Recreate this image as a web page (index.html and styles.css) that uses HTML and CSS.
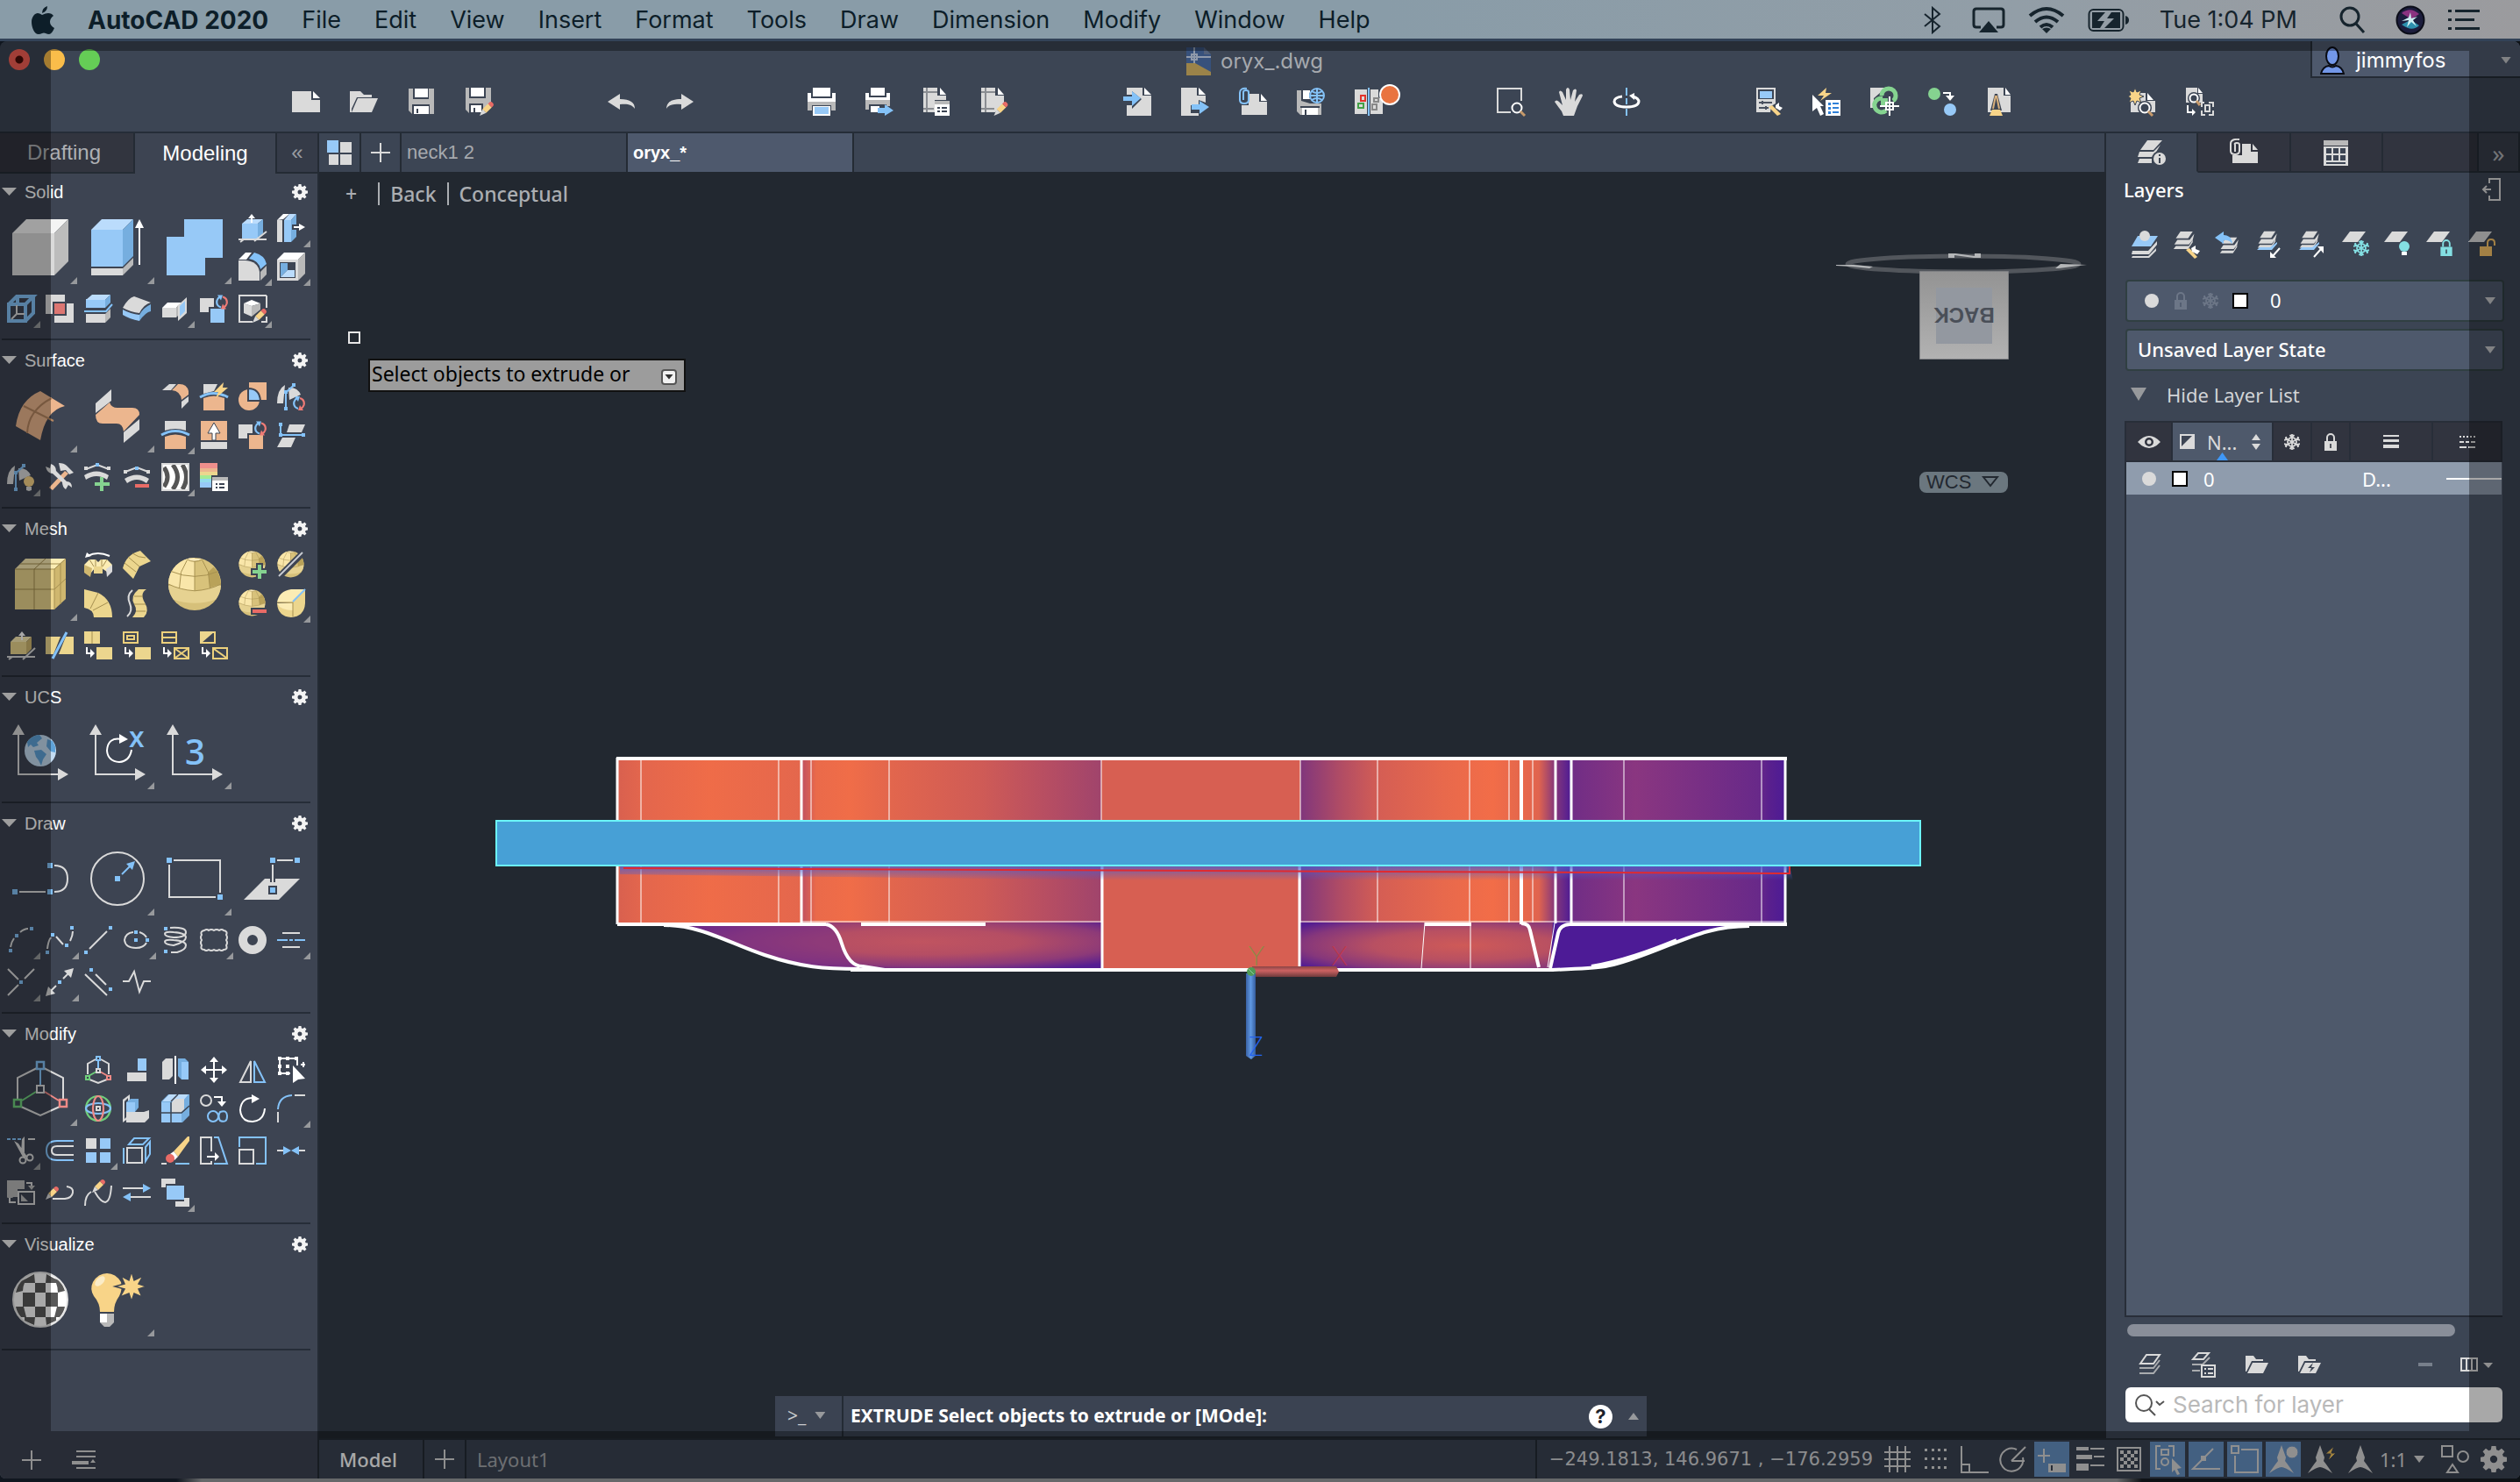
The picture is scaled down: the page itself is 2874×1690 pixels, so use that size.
FILE: index.html
```html
<!DOCTYPE html>
<html lang="en">
<head>
<meta charset="utf-8">
<title>AutoCAD 2020 - oryx_.dwg</title>
<link rel="stylesheet" href="styles.css">
</head>
<body>
<svg class="defs" aria-hidden="true">
  <symbol id="gear" viewBox="0 0 18 18"><path fill-rule="evenodd" d="M7.500 0h3l.4 2.500 1.500.6 2-1.500 2.100 2.100-1.500 2 .6 1.500 2.400.4v3l-2.400.4-.6 1.500 1.500 2-2.100 2.100-2-1.500-1.500.6-.4 2.300h-3l-.4-2.300-1.500-.6-2 1.500-2.100-2.100 1.500-2-.6-1.500L0 10.600v-3l2.400-.4L3 5.700l-1.500-2 2.100-2.100 2 1.500 1.500-.6zM9 6.500a2.500 2.500 0 1 0 0 5 2.500 2.500 0 0 0 0-5z"/></symbol>
  <symbol id="ball" viewBox="0 0 64 64"><circle cx="32" cy="32" r="31" fill="#d6c07a"/><path fill="#e6d291" d="M1 34a31 31 0 0 0 6 16c16 6 34 6 50 0a31 31 0 0 0 6-16z"/><path fill="#f9e6a9" d="M1 32q14 7 31 8V1a31 31 0 0 0-31 31z"/><path fill="#d8c27b" d="M32 40q17-1 31-8Q61 8 38 2l-6 3z"/><path fill="#b9a259" d="M50 36l13-4Q61 16 54 12l-6 6z"/><path fill="#fbecc0" d="M23 2q9 6 18 0z"/><path class="mesh" d="M32 5v35M23 4l-7 14-2 19M41 4l7 14 2 19M4 17q28 12 56 0M23 3q9 5 18 0M1 32q14 7 31 8 17-1 31-8"/></symbol>
  <symbol id="pencil" viewBox="0 0 16 16"><path fill="#f8d488" d="M3 9l6-6 4 4-6 6z"/><path fill="#e96b66" d="M10 2a2.800 2.800 0 0 1 4 4l-1 1-4-4z"/><path class="g" d="M3 9l4 4-7 3z"/></symbol>
  <symbol id="snow" viewBox="0 0 18 18"><g fill="none" stroke="currentColor" stroke-width="1.800"><path d="M9 0v18M1 4.500l16 9M1 13.500l16-9"/><circle cx="9" cy="9" r="5"/><path d="M6.500 1L9 3.500 11.500 1M6.500 17L9 14.500 11.500 17M0 7l3-.8L2 3M18 7l-3-.8L16 3M0 11l3 .8L2 15M18 11l-3 .8 1 3.200"/></g></symbol>
  <symbol id="lock" viewBox="0 0 14 20"><path fill="none" stroke="currentColor" stroke-width="2" d="M3 9V5a4 4 0 0 1 8 0v4"/><path fill="currentColor" fill-rule="evenodd" d="M0 9h14v11H0zM6.200 12v5h1.600v-5z"/></symbol>
  <symbol id="stack" viewBox="0 0 32 32"><path class="g" d="M10 1h16l-6 9H4zM6 12h16l6-8-2 8-5 6H2zM4 20h17l5-8v3l-6 9H1z"/></symbol>
  <symbol id="cycle" viewBox="0 0 14 16"><path fill="none" stroke="#84c2f8" stroke-width="2.200" d="M6 14Q0 12 1.500 6 2.500 3 5 2"/><path fill="#84c2f8" d="M2 0h6L6 6z"/><path fill="none" stroke="#ee7b76" stroke-width="2.200" d="M8 2q6 2 4.500 8-1 3-3.500 4"/><path fill="#ee7b76" d="M12 16H6l2-6z"/></symbol>
  <symbol id="ucs" viewBox="0 0 64 64"><path class="sg" d="M7 10v47h46"/><path class="g" d="M7 0l7 12H0zM52 50l12 7-12 7z"/></symbol>
  <symbol id="compass" viewBox="0 0 28 32"><path fill="currentColor" d="M14 0l5 14-1 4q4 5 10 14-10-7-14-7T0 32q6-9 10-14l-1-4z"/></symbol>
</svg>

<header class="menubar">
  <nav class="menus">
    <button class="apple" aria-label="Apple menu"><svg width="28" height="34" viewBox="0 0 28 34"><path fill="currentColor" d="M20 1q0 6-6 8 0-6 6-8zM14 11q4-2 7-2 4 0 6 3-4 3-4 7t5 7q-3 7-6 7-2 0-4-1t-4 0-4 1C5 33 2 25 2 19S6 9 9 9q2 0 5 2z"/></svg></button>
    <button class="appname">AutoCAD 2020</button>
    <button>File</button><button>Edit</button><button>View</button><button>Insert</button><button>Format</button><button>Tools</button><button>Draw</button><button>Dimension</button><button>Modify</button><button>Window</button><button>Help</button>
  </nav>
  <div class="tray">
    <svg class="blue" width="22" height="32" viewBox="0 0 22 32"><path class="ik" d="M2 9l17 14-8 7V2l8 7L2 23"/></svg>
    <svg width="38" height="32" viewBox="0 0 38 32"><path class="ik3" d="M10 24H5q-3 0-3-3V6q0-3 3-3h28q3 0 3 3v15q0 3-3 3h-5"/><path fill="currentColor" d="M19 17l11 13H8z"/></svg>
    <svg width="42" height="32" viewBox="0 0 42 32"><path class="ik4" d="M2 11q19-16 38 0M8 18q13-11 26 0M14 24q7-6 14 0"/><path fill="currentColor" d="M16 26q5-3 10 0l-5 5z"/></svg>
    <svg width="48" height="28" viewBox="0 0 48 28"><rect class="ik" x="1.500" y="2" width="39" height="24" rx="5"/><path fill="currentColor" d="M5 5h15l-9 10h8l-5 8H5zM27 5h10v18H19l11-11h-8z"/><path fill="currentColor" d="M43 9q4 1 4 5t-4 5z"/></svg>
    <time>Tue 1:04 PM</time>
    <svg class="spot" width="30" height="32" viewBox="0 0 30 32"><circle class="ik3" cx="12" cy="12" r="10"/><path class="ik3" d="M19 20l9 10"/></svg>
    <svg class="siri" width="34" height="34" viewBox="0 0 34 34"><circle cx="17" cy="17" r="15.500" fill="#1c1d3d" stroke="#0b0d18" stroke-width="2"/><path fill="#8a3280" d="M7 9q10-8 20 1l-9 6z"/><path fill="#2c8fae" d="M7 22q7-4 11-5l9 6q-8 8-20-1z"/><path fill="#cdeef2" d="M17 8l1 7 7-2-5 4 4 7-6-5-5 6 2-8-8 1 8-4z"/></svg>
    <svg width="36" height="26" viewBox="0 0 36 26"><path fill="currentColor" d="M0 1h4v3H0zM8 1h28v3H8zM0 11h4v3H0zM8 11h22v3H8zM0 21h4v3H0zM8 21h28v3H8z"/></svg>
  </div>
</header>

<div class="window">
  <div class="titlebar">
    <div class="lights"><button class="close" aria-label="Close"></button><button class="min" aria-label="Minimize"></button><button class="max" aria-label="Zoom"></button></div>
    <h1 class="title"><svg width="28" height="32" viewBox="0 0 28 32"><path fill="#37517c" d="M0 0h20l8 8v24H0z"/><path fill="#52607a" d="M20 0l8 8h-8z"/><path fill="#9b8349" d="M0 18h10l18 10v4H0z"/><path fill="none" stroke="#8f99aa" stroke-width="2" d="M9 0v18M0 11h28M6 8h6v6H6z"/></svg><span>oryx_.dwg</span></h1>
    <button class="user"><svg width="28" height="34" viewBox="0 0 28 34"><ellipse cx="14" cy="12" rx="7" ry="10" fill="#7397e8" stroke="#0a0c14" stroke-width="2"/><path fill="#7397e8" stroke="#0a0c14" stroke-width="2" d="M1 32q2-8 9-9 4 3 8 0 7 1 9 9z"/></svg><span>jimmyfos</span><i class="tri"></i></button>
  </div>

  <div class="toolbar" role="toolbar" aria-label="Quick access">
    <div class="tgroup">
      <button aria-label="New"><svg viewBox="0 0 32 32"><path class="g" d="M0 4h22v10h10v14H0z"/><path class="w" d="M24 4l8 8h-8z"/></svg></button>
      <button aria-label="Open"><svg viewBox="0 0 32 32"><path class="g" d="M0 4h12l4 4h9v3H8L2 24v4H0z"/><path class="g" d="M9 12h23l-7 16H2z"/></svg></button>
      <button aria-label="Save"><svg viewBox="0 0 32 32"><path class="gd" d="M1 1h5v12h18V1h6v29H5l-4-4z"/><path class="w" d="M8 1h15v10H8z"/><path class="k" d="M5 19h20v11H5z"/><path class="w" d="M7 21h17v9H7z"/><path class="k" d="M10 24h2v5h-2z"/></svg></button>
      <button aria-label="Save as"><svg viewBox="0 0 32 32"><path class="gd" d="M0 0h4v12h19V0h6v17L19 29H4l-4-4z"/><path class="w" d="M6 0h15v10H6z"/><path class="k" d="M4 18h16v11H4z"/><path class="w" d="M6 20h12v8H6z"/><path class="k" d="M9 23h2v5H9z"/><use href="#pencil" x="16" y="15" width="17" height="17"/></svg></button>
    </div>
    <div class="tgroup">
      <button aria-label="Undo"><svg viewBox="0 0 32 32"><path class="g" d="M0 16L14 7v6c12 0 17 4 17 11-3-5-9-6-17-5v6z"/></svg></button>
      <button aria-label="Redo"><svg viewBox="0 0 32 32"><path class="g" d="M32 16L18 7v6C6 13 1 17 1 24c3-5 9-6 17-5v6z"/></svg></button>
    </div>
    <div class="tgroup">
      <button aria-label="Plot"><svg viewBox="0 0 32 32"><path class="w" d="M6 0h20v10H6zM0 6h4v6h24V6h4v10H0z"/><path class="gd" d="M0 16h32v10h-5v-6H5v6H0z"/><path class="w" d="M6 21h20v11H6z"/><path class="b" d="M8 22h16v8H8z"/></svg></button>
      <button aria-label="Batch plot"><svg viewBox="0 0 32 32"><path class="w" d="M6 0h16v9H6zM0 6h4v5h20V6h4v8H0z"/><path class="gd" d="M0 14h28v7h-4v-2H4v6H0z"/><path class="w" d="M6 21h10v7H6z"/><path class="ba" d="M14 23h8v-4l10 7-10 6v-3h-8z"/></svg></button>
      <button aria-label="Page setup"><svg viewBox="0 0 32 32"><path class="g" d="M0 0h16v9h10v5H13v14H0z"/><path class="w" d="M19 0l7 8h-7z"/><path fill="none" stroke="#8a8d92" stroke-width="2" d="M4 0v28M0 5h16M0 24h12"/><path class="gd" d="M13 15h17v4H13z"/><path class="w" d="M13 19h17v13H13z"/><path class="k" d="M16 22h3v2h-3zM21 22h6v2h-6zM16 26h3v2h-3zM21 26h6v2h-6z"/></svg></button>
      <button aria-label="Edit page"><svg viewBox="0 0 32 32"><path class="g" d="M0 0h16v9h10v8L16 28H0z"/><path class="w" d="M19 0l7 8h-7z"/><path fill="none" stroke="#8a8d92" stroke-width="2" d="M5 0v28M0 5h16M0 24h15"/><use href="#pencil" x="14" y="15" width="18" height="17"/></svg></button>
    </div>
    <div class="tgroup">
      <button aria-label="Import"><svg viewBox="0 0 32 32"><path class="g" d="M4 0h18v9h10v23H4V20h6v4l11-11-11-9v4H4z"/><path class="w" d="M24 0l8 8h-8z"/><path class="ba" d="M0 10h10V4l10 8-10 9v-6H0z"/></svg></button>
      <button aria-label="Export"><svg viewBox="0 0 32 32"><path class="g" d="M0 0h18v9h10v8l-8-3v6h-9v9h9v3H0z"/><path class="w" d="M20 0l8 8h-8z"/><path class="ba" d="M12 19h9v-4l11 7-11 8v-5h-9z"/></svg></button>
      <button aria-label="Attach"><svg viewBox="0 0 32 32"><path class="g" d="M11 7h12v9h9v15H3V20h8z"/><path class="w" d="M25 7l7 8h-7z"/><path fill="none" stroke="#84c2f8" stroke-width="2" d="M9 1q-8-1-8 5v8q0 4 5 4t5-4V5q0-2-3-2T5 5v9"/></svg></button>
      <button aria-label="Save to web"><svg viewBox="0 0 32 32"><path class="gd" d="M0 3h5v12l10 3h13v13H4l-4-4z"/><path class="w" d="M7 3h8v10H7zM6 23h18v8H6z"/><path class="k" d="M4 21h22v2H4zM9 25h2v6H9z"/><circle cx="23" cy="9" r="9" fill="#3c4554"/><g fill="none" stroke="#84c2f8" stroke-width="2"><circle cx="23" cy="9" r="8"/><path d="M23 1v16M15 9h16M17 4q6 4 12 0M17 14q6-4 12 0"/></g></svg></button>
      <button class="badge" aria-label="Compare, new"><svg viewBox="0 0 32 32"><path class="g" d="M0 2h14v28H0zM18 2h9v10h5v18H18z"/><path class="ba" d="M15 0h2v32h-2z"/><path fill="none" stroke="#e2342c" stroke-width="2" d="M7 9h5v6H7z"/><path fill="none" stroke="#43a047" stroke-width="2" d="M4 18h6v5H4z"/><path fill="none" stroke="#888" stroke-width="2" d="M20 19h5v6h-5zM22 12h5v4h-5z"/></svg></button>
    </div>
    <div class="tgroup">
      <button aria-label="Zoom window"><svg viewBox="0 0 32 32"><path class="sg" d="M16 28H1V1h27v14"/><circle class="sw" cx="23" cy="23" r="5.500"/><path stroke="#c79a6b" stroke-width="3" d="M27 27l5 5"/></svg></button>
      <button aria-label="Pan"><svg viewBox="0 0 32 32"><path class="g" d="M10 32q-1-5-5-9l-5-7q2-3 5 0l4 4L5 5q1-3 4 0l4 9V2q2-4 4 0l1 12 3-11q3-3 4 0l-2 13 5-8q4-2 4 1l-6 12-4 11z"/></svg></button>
      <button aria-label="Orbit"><svg viewBox="0 0 32 32"><path fill="none" stroke="#84c2f8" stroke-width="2" d="M16 0v9M16 12v7M16 24v8"/><path class="sw3" d="M11 10Q2 11 2 16q1 6 14 6t14-6q0-4-7-6"/><path class="w" d="M25 6l-6 3 6 5z"/></svg></button>
    </div>
    <div class="tgroup">
      <button aria-label="Properties"><svg viewBox="0 0 32 32"><path class="g" d="M2 0h22v18l-5 3-1 7H2z"/><path fill="#3c4554" d="M4 2h18v11H4z"/><path class="b" d="M6 4h14v8H6z"/><path class="sk" d="M5 17h15M5 23h11M9 15v4M13 21v4"/><path fill="#f8d488" d="M16 22l4-2 10 10-4 2z"/><path class="w" d="M24 20l4-3v4l4 2-3 3-5-3z"/></svg></button>
      <button aria-label="Quick select"><svg viewBox="0 0 32 32"><path fill="#f8d488" d="M16 0L6 9h7l-4 6 13-9h-7z"/><path class="w" d="M0 8l13 13H9l4 9-4 2-4-9-5 4z"/><path class="w" d="M15 14h17v18H15z"/><path fill="#2f80d8" d="M18 17h3v3h-3zM23 17h7v2h-7zM18 22h3v3h-3zM23 22h7v2h-7zM18 27h3v3h-3zM23 27h7v2h-7z"/></svg></button>
      <button aria-label="Geolocation"><svg viewBox="0 0 32 32"><path class="g" d="M0 0h18L4 12v11H0z"/><path fill="none" stroke="#85d390" stroke-width="5" d="M14 12a8 8 0 1 0 4 14M13 9a8 8 0 0 1 16 0q0 4-3 6"/><path fill="#85d390" d="M12 12h8v8h-8z"/><path fill="none" stroke="#fff" stroke-width="2" d="M22 10v22M11 21h22M18 17h8v8h-8z"/></svg></button>
      <button aria-label="Match properties"><svg viewBox="0 0 32 32"><circle class="gn" cx="7" cy="7" r="7"/><circle class="b" cx="25" cy="25" r="7"/><path class="sw" d="M17 6h8v5"/><path class="w" d="M20 9h10l-5 6z"/></svg></button>
      <button aria-label="Measure"><svg viewBox="0 0 32 32"><path class="g" d="M2 0h18v9h8v19H2z"/><path class="w" d="M22 0l6 8h-6z"/><path class="k" d="M10 7h3l5 19H5z"/><path fill="none" stroke="#d8b07c" stroke-width="2" d="M11 9L8 24M12 9l3 15"/><path fill="#f8d488" d="M7 25h9l3 7H4z"/></svg></button>
    </div>
    <div class="tgroup">
      <button aria-label="Create block"><svg viewBox="0 0 32 32"><path class="g" d="M3 15l10-9h7v9h11v13H3z"/><path class="w" d="M22 6l7 8h-7z"/><path fill="#f8d488" stroke="#3c4554" d="M8 0l2 5 5-2-2 5 5 2-5 2 2 5-5-2-2 5-2-5-5 2 2-5-3-2 3-2-2-5 5 2z"/><circle cx="19" cy="23" r="8" fill="#3c4554"/><circle class="sw" cx="19" cy="23" r="5.500"/><path stroke="#c79a6b" stroke-width="3" d="M23 27l5 5"/></svg></button>
      <button aria-label="Insert block"><svg viewBox="0 0 32 32"><path class="g" d="M0 0h13v7h6v10H0z"/><path class="w" d="M14 0l5 6h-5z"/><circle cx="9" cy="12" r="7" fill="#3c4554"/><circle class="sw" cx="9" cy="12" r="4.500"/><path stroke="#c79a6b" stroke-width="3" d="M12 15l4 5"/><path class="sw" d="M2 20v8h6"/><path class="w" d="M7 24l4 4-4 4z"/><path class="sg" d="M21 17h-3v5M26 17h5v5M31 26v5h-5M22 31h-4v-5M22 20h5v7h-5z"/></svg></button>
    </div>
  </div>

  <div class="workspace">
    <aside class="palette">
      <div class="ptabs"><button class="ptab dim">Drafting</button><button class="ptab on">Modeling</button><button class="ptab fold" aria-label="Collapse">«</button></div>

      <section class="tools">
        <header><i class="tri"></i><h2>Solid</h2><button class="cog" aria-label="Solid settings"><svg><use href="#gear"/></svg></button></header>
        <div class="grid">
          <button class="big fly" aria-label="Box"><svg viewBox="0 0 64 64"><path fill="#dadada" d="M0 16h48v48H0z"/><path fill="#f4f4f4" d="M0 16L16 0h48L48 16z"/><path fill="#bcbcbc" d="M48 16L64 0v48L48 64z"/></svg></button>
          <button class="big fly" aria-label="Extrude"><svg viewBox="0 0 64 64"><path class="b" d="M2 12h36v42H2z"/><path class="bl" d="M2 12L14 0h36L38 12z"/><path class="bd" d="M38 12L50 0v42L38 54z"/><path class="g" d="M2 56h36v8H2z"/><path class="gd" d="M38 56l12-12v8L38 64z"/><path class="sw" d="M57 52V8"/><path class="w" d="M57 0l5 10H52z"/></svg></button>
          <button class="big fly" aria-label="Union"><svg viewBox="0 0 64 64"><path class="b" d="M20 0h44v44H44v20H0V20h20z"/></svg></button>
          <button aria-label="Presspull"><svg viewBox="0 0 32 32"><path class="b" d="M4 11h18v17H4z"/><path class="bl" d="M4 11l6-5h18l-6 5z"/><path class="bd" d="M22 11l6-5v16l-6 6z"/><path class="sg" d="M0 29h24M18 31L32 20M2 32l4-3M24 29h8"/><path class="w" d="M15 0l4 5h-3v5h-2V5h-3z"/></svg></button>
          <button class="fly" aria-label="Offset face"><svg viewBox="0 0 32 32"><path class="g" d="M0 7h6v25H0z"/><path class="w" d="M0 7l7-7h7L7 6z"/><path class="b" d="M8 7h8v25H8z"/><path class="bl" d="M8 7l6-7h8l-6 7z"/><path class="bd" d="M16 7l6-7v26l-6 6z"/><path class="k" d="M17 12h8v6h-8z"/><path class="w" d="M19 14h6v-3l7 4-7 4v-3h-6z"/></svg></button>
          <button class="fly" aria-label="Fillet edge"><svg viewBox="0 0 32 32"><path class="g" d="M0 9h8q14 1 16 13v10H0z"/><path class="w" d="M0 8l8-8h7L9 8z"/><path class="ba" d="M12 7l6-7q12 3 14 13l-7 6Q23 9 12 7z"/><path class="gd" d="M25 22l7-7v10l-7 7z"/></svg></button>
          <button class="fly" aria-label="Shell"><svg viewBox="0 0 32 32"><path class="g" fill-rule="evenodd" d="M0 8h24v24H0zM3 11v18h18V11z"/><path class="w" d="M0 8l8-8h24l-8 8z"/><path class="gd" d="M24 8l8-8v24l-8 8z"/><path class="bd" d="M4 12h8v8l-8 8z"/><path class="bl" d="M12 20h8v8H4z"/></svg></button>
          <button class="fly" aria-label="Polysolid"><svg viewBox="0 0 32 32"><path fill="none" stroke="#84c2f8" stroke-width="4" d="M2 11h19v19H2zM2 11l9-9h19L21 11M30 2v19l-9 9M12 2v7"/><path class="sg" d="M11 12v10l-6 6M12 22h8"/></svg></button>
          <button aria-label="Interfere"><svg viewBox="0 0 32 32"><path class="g" d="M0 0h22v8H8v14H0zM24 10h8v22H10v-8h14z"/><path fill="#dc7672" d="M10 10h12v12H10z"/></svg></button>
          <button aria-label="Slice"><svg viewBox="0 0 32 32"><path class="b" d="M2 5h22v10H2z"/><path class="bl" d="M2 6l7-6h21l-6 6z"/><path class="bd" d="M24 6l6-6v9l-6 6z"/><path fill="none" stroke="#84c2f8" stroke-width="2" d="M0 19h25l7-8"/><path class="g" d="M2 22h22v10H2z"/><path class="gd" d="M24 22l6-6v10l-6 6z"/></svg></button>
          <button aria-label="Thicken"><svg viewBox="0 0 32 32"><path class="g" d="M0 15Q6 4 13 2l19 7q-8 2-13 12Q9 20 0 15z"/><path class="b" d="M0 17q9 5 19 6v7Q8 28 0 23z"/><path class="bd" d="M19 23q4-8 13-12v8q-6 1-13 11z"/></svg></button>
          <button class="fly" aria-label="Extract edges"><svg viewBox="0 0 32 32"><path class="g" d="M1 15h16v11H1z"/><path class="w" d="M1 15l6-6h16l-6 6z"/><path class="gd" d="M17 15l2-3v12l-2 2z"/><path class="g" d="M19 12l10-9v18L19 30z"/><path class="b" d="M21 13l6-6v12l-6 6z"/></svg></button>
          <button aria-label="Convert to solid"><svg viewBox="0 0 32 32"><path class="g" d="M0 4h16v10h-6v6H0z"/><path class="b" d="M12 16h16v16H12z"/><use href="#cycle" x="18" y="0" width="14" height="17"/></svg></button>
          <button class="fly" aria-label="Edit solid"><svg viewBox="0 0 32 32"><path class="sg" d="M32 1v14M32 1H1v30h15M26 31h6v-6"/><path class="g" d="M6 10l9 3v12l-9-4z"/><path class="w" d="M6 10l9-4 10 4-10 3z"/><path class="gd" d="M15 13l10-3v7l-10 8z"/><use href="#pencil" x="16" y="15" width="17" height="17"/></svg></button>
        </div>
      </section>

      <section class="tools">
        <header><i class="tri"></i><h2>Surface</h2><button class="cog" aria-label="Surface settings"><svg><use href="#gear"/></svg></button></header>
        <div class="grid">
          <button class="big fly" aria-label="Surface network"><svg viewBox="0 0 64 64"><path class="o" d="M4 44Q8 14 32 4l28 17Q38 26 32 60z"/><path fill="none" stroke="#b58660" stroke-width="2" d="M13 21l34 17M17 52Q18 26 45 12"/></svg></button>
          <button class="big fly" aria-label="Sweep"><svg viewBox="0 0 64 64"><path class="g" d="M7 18L25 2v13L7 29z"/><path class="o" d="M7 31l16-14q2 6 9 6h17q8 0 8 8L39 50q-1-9-8-9H15q-8 0-8-10z"/><path class="g" d="M39 51l18-15v12L39 63z"/></svg></button>
          <button aria-label="Surface blend"><svg viewBox="0 0 32 32"><path class="g" d="M1 9l8-7h8l-6 7z"/><path class="o" d="M12 9l7-7q10-1 12 8v4l-8 6Q22 10 12 9z"/><path class="g" d="M23 22l8-6v6l-8 8z"/></svg></button>
          <button aria-label="Surface trim"><svg viewBox="0 0 32 32"><path class="g" d="M4 2h16l-4 8-12 3z"/><path class="o" d="M4 18q12-5 24 0v14H4z"/><path fill="none" stroke="#84c2f8" stroke-width="3" d="M0 17q16-9 32 0"/><path fill="#f8d488" d="M27 0L16 11h5l-3 7 14-12h-6z"/></svg></button>
          <button aria-label="Surface subtract"><svg viewBox="0 0 32 32"><path class="o" d="M12 0h20v20h-7Q23 9 12 8z"/><circle class="o" cx="12" cy="20" r="12"/><path fill="#97c9f7" stroke="#3d4452" stroke-width="2" d="M11 7q13 0 14 14H11z"/></svg></button>
          <button aria-label="Rebuild"><svg viewBox="0 0 32 32"><path class="g" d="M0 24Q0 8 9 3L7 24zM13 6q10-1 14 8L14 20z"/><path class="ba" d="M9 12h2v18H9zM17 1h4v4h-4zM8 9h4v4H8zM8 28h4v4H8zM10 10l8-7 1 2-8 7z"/><use href="#cycle" x="18" y="16" width="14" height="16"/></svg></button>
          <button class="fly" aria-label="Surface patch"><svg viewBox="0 0 32 32"><path class="g" d="M4 0h24v11q-12-4-24 0z"/><path class="o" d="M4 18q12-5 24 0v14H4z"/><path fill="none" stroke="#84c2f8" stroke-width="3" d="M0 16q16-9 32 0"/></svg></button>
          <button aria-label="Extend"><svg viewBox="0 0 32 32"><path class="o" d="M1 0h30v22H1z"/><path class="g" d="M1 24h30v8H1z"/><path fill="#fff" stroke="#3d4452" d="M16 2l7 12h-5v8h-4v-8H9z"/></svg></button>
          <button aria-label="Convert to surface"><svg viewBox="0 0 32 32"><path class="g" d="M0 4h16v10h-6v6H0z"/><path class="o" d="M12 16h16v16H12z"/><use href="#cycle" x="18" y="0" width="14" height="17"/></svg></button>
          <button aria-label="Project"><svg viewBox="0 0 32 32"><path class="g" d="M14 4h18l-4 9H11zM6 19h15l-5 11H0z"/><path fill="none" stroke="#84c2f8" stroke-width="2" d="M4 4v12h26"/><path class="ba" d="M2 2h4v4H2zM2 14h4v4H2zM28 14h4v4h-4z"/></svg></button>
          <button class="fly" aria-label="Show CV"><svg viewBox="0 0 32 32"><path class="g" d="M0 24Q0 8 9 3L7 24zM13 6q10-1 14 8L14 20z"/><path class="ba" d="M9 12h2v18H9zM17 1h4v4h-4zM8 9h4v4H8zM8 28h4v4H8zM10 10l8-7 1 2-8 7z"/><circle cx="25" cy="21" r="6" fill="#f8d488"/><path class="g" d="M22 27h6v4l-3 1-3-1z"/></svg></button>
          <button aria-label="Tools"><svg viewBox="0 0 32 32"><path class="o" d="M4 28l18-19 4 3L8 31z"/><path class="g" d="M0 4l5 2 1-5q6 2 6 8l12 12q6 0 6 7l-4-3-3 5q-4-3-4-8L8 12Q2 12 0 4zM15 0q6 0 9 3l8 8-5 2-4-5-6 1z"/></svg></button>
          <button aria-label="CV add"><svg viewBox="0 0 32 32"><path class="sg" d="M2 7L15 2l13 5"/><path class="g" d="M0 4h4v4H0zM26 4h4v4h-4zM0 14q14-9 28 0l-2 5q-12-8-24 0z"/><path class="ba" d="M13 0h4v4h-4z"/><path class="gn" d="M18 16h4v6h7v4h-7v6h-4v-6h-6v-4h6z"/></svg></button>
          <button aria-label="CV remove"><svg viewBox="0 0 32 32"><path class="sg" d="M3 10l13-5 13 5"/><path class="g" d="M1 8h4v4H1zM27 8h4v4h-4zM2 18q14-9 28 0l-3 5q-11-8-22 0z"/><path class="ba" d="M14 4h4v4h-4z"/><path fill="#e96b66" d="M14 24h16v4H14z"/></svg></button>
          <button class="fly" aria-label="Zebra"><svg viewBox="0 0 32 32"><path class="w" d="M0 0h32v32H0z"/><path fill="none" stroke="#555" stroke-width="5" d="M3 5q8 11 0 22M13 2q11 14 0 28M24 2q9 14 0 28"/><path fill="none" stroke="#dadada" stroke-width="2" d="M1 1h30v30H1z"/></svg></button>
          <button aria-label="Analysis options"><svg viewBox="0 0 32 32"><path fill="#ee8f8c" d="M0 0h20v6H0z"/><path class="o" d="M0 6h20v4H0z"/><path class="y" d="M0 10h20v4H0z"/><path fill="#a5eb94" d="M0 14h13v4H0z"/><path fill="#93dcec" d="M0 18h13v4H0z"/><path class="b" d="M0 22h13v6H0z"/><path class="gd" d="M14 16h18v4H14z"/><path class="w" d="M14 20h18v12H14z"/><path class="k" d="M18 23h2v2h-2zM22 23h6v2h-6zM18 27h2v2h-2zM22 27h6v2h-6z"/></svg></button>
        </div>
      </section>

      <section class="tools">
        <header><i class="tri"></i><h2>Mesh</h2><button class="cog" aria-label="Mesh settings"><svg><use href="#gear"/></svg></button></header>
        <div class="grid">
          <button class="big fly" aria-label="Mesh box"><svg viewBox="0 0 64 64"><path class="y" d="M3 15h45v46H3z"/><path class="yl" d="M3 15L15 3h46L48 15z"/><path class="yd" d="M48 15L61 3v46L48 61z"/><path class="mesh" d="M3 15h45v46M48 15L61 3M3 38h45l13-12M25 61V15L38 3M9 9h46v46"/></svg></button>
          <button aria-label="Revolved mesh"><svg viewBox="0 0 32 32"><path class="yl" d="M0 16l6-6h7l3 3 3-3h7l6 6-6 8-6-4h-8l-4 5z"/><path class="yd" d="M0 16l9 4-2 10-7-5z"/><path class="y" d="M11 18h10v8H11z"/><path class="g" d="M25 21l7-5v8l-6 6z"/><path class="mesh" d="M6 10l5 8M13 10v8M20 10v8M26 10l-5 8"/><path class="sw" d="M4 6Q15 0 29 6"/><path class="w" d="M1 8l2-6 5 4z"/></svg></button>
          <button aria-label="Edge mesh"><svg viewBox="0 0 32 32"><path class="y" d="M20 0l12 12-13 6-7 14-12-12Q4 4 20 0z"/><path class="mesh" d="M6 7l13 11M11 3q7 5 15 5M2 14l13 10"/></svg></button>
          <button class="big" aria-label="Mesh sphere"><svg viewBox="0 0 64 64"><use href="#ball" x="1" y="1" width="62" height="62"/></svg></button>
          <button aria-label="Smooth more"><svg viewBox="0 0 32 32"><use href="#ball" x="0" y="0" width="31" height="31"/><path fill="#85d390" stroke="#3d4452" stroke-width="2" d="M21 15h6v6h6v6h-6v6h-6v-6h-6v-6h6z"/></svg></button>
          <button aria-label="Refine mesh"><svg viewBox="0 0 32 32"><use href="#ball" x="0" y="0" width="31" height="31"/><path stroke="#3d4452" stroke-width="7" d="M2 30L30 2"/><path stroke="#c9ccd2" stroke-width="2" d="M2 29L29 2"/></svg></button>
          <button aria-label="Tabulated mesh"><svg viewBox="0 0 32 32"><path class="y" d="M0 0l16 4q16 8 16 28H11q0-9-11-11z"/><path class="mesh" d="M16 4L7 22M27 15l-17 9"/></svg></button>
          <button aria-label="Ruled mesh"><svg viewBox="0 0 32 32"><path class="sg" d="M11 1q-7 6-3 15t-3 15"/><path class="y" d="M27 0q-8 5-2 15t-1 17H11q7-7 2-15-5-9 5-17z"/><path class="mesh" d="M13 8h10M13 17h13M15 25h11"/></svg></button>
          <button aria-label="Smooth less"><svg viewBox="0 0 32 32"><use href="#ball" x="0" y="0" width="31" height="31"/><path fill="#e96b66" stroke="#3d4452" stroke-width="2" d="M15 22h18v6H15z"/></svg></button>
          <button class="fly" aria-label="Add crease"><svg viewBox="0 0 32 32"><path class="yl" d="M0 15Q2 2 16 0h16L18 15z"/><path class="y" d="M0 16l18-1L32 0v16q-1 15-16 16Q1 31 0 16z"/><path class="yl" d="M0 16h18v8Q4 24 0 16z"/><path class="mesh" d="M0 15h18v16"/><path stroke="#84c2f8" stroke-width="2" d="M18 14L32 0"/></svg></button>
          <button aria-label="Extrude face"><svg viewBox="0 0 32 32"><path class="y" d="M4 12h18v14H4z"/><path class="yl" d="M4 12l6-6h18l-6 6z"/><path class="yd" d="M22 12l6-6v14l-6 6z"/><path class="sg" d="M0 29h27M18 32L32 19M2 32l4-3M24 29h8"/><path class="w" d="M17 0l4 5h-3v5h-2V5h-3z"/></svg></button>
          <button aria-label="Split face"><svg viewBox="0 0 32 32"><path class="y" d="M0 6h17L9 26H0zM23 6h9v20H15z"/><path stroke="#84c2f8" stroke-width="3" d="M8 31L24 1"/></svg></button>
          <button aria-label="Merge face"><svg viewBox="0 0 32 32"><path class="y" d="M0 0h18v14H0zM14 18h18v14H14z"/><path class="mesh" d="M9 0v14"/><path class="sw" d="M3 18v7h5"/><path class="w" d="M7 20l5 5-5 5z"/></svg></button>
          <button aria-label="Close hole"><svg viewBox="0 0 32 32"><path class="sy" d="M1 1h16v12H1zM5 5h8v4H5z"/><path class="y" d="M14 18h18v14H14z"/><path class="sw" d="M3 18v7h5"/><path class="w" d="M7 20l5 5-5 5z"/></svg></button>
          <button aria-label="Collapse face"><svg viewBox="0 0 32 32"><path class="sy" d="M1 1h16v12H1zM1 7h16M15 19h16v12H15zM16 20l14 10M30 20L16 30"/><path class="sw" d="M3 18v7h5"/><path class="w" d="M7 20l5 5-5 5z"/></svg></button>
          <button aria-label="Spin edge"><svg viewBox="0 0 32 32"><path class="sy" d="M1 1h16v12H1zM15 19h16v12H15zM16 20l14 10"/><path class="y" d="M0 0h17L2 13H0z"/><path class="sw" d="M3 18v7h5"/><path class="w" d="M7 20l5 5-5 5z"/></svg></button>
        </div>
      </section>

      <section class="tools">
        <header><i class="tri"></i><h2>UCS</h2><button class="cog" aria-label="UCS settings"><svg><use href="#gear"/></svg></button></header>
        <div class="grid">
          <button class="big" aria-label="World UCS"><svg viewBox="0 0 64 64"><use href="#ucs"/><circle cx="32" cy="30" r="18" fill="#c4dcf2"/><path fill="#5fa3d9" d="M17 20q6-8 14-8l3 4-6 5 2 3-6 2-3-3-3 3zM25 30l8-1 6 5-4 6-2 7-3-6-3-4zM40 17l6 2 3 6v7l-5-1-5-6z"/></svg></button>
          <button class="big fly" aria-label="Rotate UCS about X"><svg viewBox="0 0 64 64"><use href="#ucs"/><path class="sw" d="M37 17q-16-3-17 13 1 12 14 13 12-1 14-14"/><path class="w" d="M34 11l10 6-10 5z"/><text x="45" y="26" class="axis">x</text></svg></button>
          <button class="big fly" aria-label="3 point UCS"><svg viewBox="0 0 64 64"><use href="#ucs"/><text x="21" y="46" class="axis three">3</text></svg></button>
        </div>
      </section>

      <section class="tools">
        <header><i class="tri"></i><h2>Draw</h2><button class="cog" aria-label="Draw settings"><svg><use href="#gear"/></svg></button></header>
        <div class="grid">
          <button class="big" aria-label="Polyline"><svg viewBox="0 0 64 64"><path class="sg" d="M8 47h30M48 17q15 0 15 15T48 47"/><path class="ba" d="M0 44h6v6H0zM40 44h6v6h-6zM40 14h6v6h-6z"/></svg></button>
          <button class="big fly" aria-label="Circle"><svg viewBox="0 0 64 64"><circle class="sg" cx="32" cy="32" r="30"/><path stroke="#84c2f8" stroke-width="2" d="M37 27l10-10"/><path class="ba" d="M29 29h6v6h-6zM52 12l-3 10-7-7z"/></svg></button>
          <button class="big fly" aria-label="Rectangle"><svg viewBox="0 0 64 64"><path class="sg" d="M8 11h53v37M56 53H3V16"/><path class="ba" d="M0 8h6v6H0zM58 50h6v6h-6z"/></svg></button>
          <button class="big" aria-label="3D polyline"><svg viewBox="0 0 64 64"><path class="g" d="M24 32h40L40 56H0z"/><path stroke="#3d4452" stroke-width="6" d="M33 24v12"/><path class="sg" d="M38 11h18M33 16v24"/><path class="k" d="M28 40h10v10H28z"/><path class="ba" d="M30 8h6v6h-6zM58 8h6v6h-6zM30 42h6v6h-6z"/></svg></button>
          <button class="fly" aria-label="Arc"><svg viewBox="0 0 32 32"><path class="sg" d="M4 24q1-6 4-10M15 7q5-4 9-4"/><path class="ba" d="M2 26h4v4H2zM9 9h4v4H9zM26 1h4v4h-4z"/></svg></button>
          <button class="fly" aria-label="Spline"><svg viewBox="0 0 32 32"><path class="sg" d="M2 26q1-9 4-13M12 12l8 9M28 17q3-6 3-11"/><path class="ba" d="M0 28h4v4H0zM6 8h4v4H6zM22 20h4v4h-4zM28 0h4v4h-4z"/></svg></button>
          <button aria-label="Line"><svg viewBox="0 0 32 32"><path class="sg" d="M6 26L26 6"/><path class="ba" d="M0 28h4v4H0zM28 0h4v4h-4z"/></svg></button>
          <button class="fly" aria-label="Ellipse"><svg viewBox="0 0 32 32"><path class="sg" d="M12 7Q3 8 2 16q1 9 13 9 9 0 12-6M19 7q6 2 8 6"/><path class="ba" d="M13 5h4v4h-4zM13 14h4v4h-4zM26 14h4v4h-4z"/></svg></button>
          <button aria-label="Helix"><svg viewBox="0 0 32 32"><path class="sg" d="M10 2q18-1 18 5t-14 6Q4 12 4 9t10-2q14 1 14 6t-14 9Q4 21 4 18t10-2q14 1 14 6t-10 8h-7"/><path class="ba" d="M3 1h4v4H3zM3 27h4v4H3z"/></svg></button>
          <button class="fly" aria-label="Revision cloud"><svg viewBox="0 0 32 32"><path class="sg" d="M5 5q3-2 5 0 3-2 6 0 3-2 6 0 3-2 5 0 5 1 3 5 2 3 0 6 2 3 0 6 2 5-3 5-2 2-5 0-3 2-6 0-3 2-6 0-3 2-5 0-5 0-3-5-2-3 0-6-2-3 0-6Q0 6 5 5z"/></svg></button>
          <button aria-label="Donut"><svg viewBox="0 0 32 32"><circle cx="16" cy="16" r="11" fill="none" stroke="#dadada" stroke-width="10"/></svg></button>
          <button class="fly" aria-label="Centerline"><svg viewBox="0 0 32 32"><path class="sg" d="M6 8h20M6 24h20"/><path class="ba" d="M0 15h12v2H0zM14 15h4v2h-4zM20 15h12v2H20z"/></svg></button>
          <button class="fly" aria-label="Construction line"><svg viewBox="0 0 32 32"><path class="sg" d="M1 1l12 12M20 12L31 1M13 19L1 31"/><path class="ba" d="M14 14h4v4h-4z"/></svg></button>
          <button class="fly" aria-label="Ray"><svg viewBox="0 0 32 32"><path class="sg" d="M20 12l7-7M12 20l-7 7"/><path class="g" d="M32 0l-3 11-8-8zM0 32l3-11 8 8z"/><path class="ba" d="M14 14h4v4h-4z"/></svg></button>
          <button aria-label="Multiline"><svg viewBox="0 0 32 32"><path class="sg" d="M1 7l25 24M13 7l12 12"/><path class="ba" d="M6 0h4v4H6zM28 22h4v4h-4z"/></svg></button>
          <button aria-label="Freehand"><svg viewBox="0 0 32 32"><path class="sg" d="M0 15h7l6-11 6 23 5-12h8"/></svg></button>
        </div>
      </section>

      <section class="tools">
        <header><i class="tri"></i><h2>Modify</h2><button class="cog" aria-label="Modify settings"><svg><use href="#gear"/></svg></button></header>
        <div class="grid">
          <button class="big fly" aria-label="Gizmo"><svg viewBox="0 0 64 64"><path class="sg" d="M28 8L6 19v25M36 8l22 11v25M10 52l22 10 22-10"/><path stroke="#84c2f8" stroke-width="2" d="M32 10v17"/><path stroke="#6fcf7b" stroke-width="2" d="M27 35L11 45"/><path stroke="#f08a86" stroke-width="2" d="M37 35l16 10"/><path class="sg" d="M28 28h8v8h-8z"/><path fill="none" stroke="#84c2f8" stroke-width="2.500" d="M28 1h8v8h-8z"/><path fill="none" stroke="#6fcf7b" stroke-width="2.500" d="M2 44h8v8H2z"/><path fill="none" stroke="#f08a86" stroke-width="2.500" d="M54 44h8v8h-8z"/></svg></button>
          <button aria-label="3D move"><svg viewBox="0 0 32 32"><path class="sg" d="M13 4L4 9v12M19 4l9 5v12M6 27l10 4 10-4"/><path stroke="#84c2f8" stroke-width="2" d="M16 5v9"/><path stroke="#6fcf7b" stroke-width="2" d="M14 18l-9 5"/><path stroke="#f08a86" stroke-width="2" d="M18 18l9 5"/><path class="sg" d="M14 15h4v4h-4z"/><path fill="none" stroke="#84c2f8" stroke-width="2" d="M14 1h4v4h-4z"/><path fill="none" stroke="#6fcf7b" stroke-width="2" d="M2 23h4v4H2z"/><path fill="none" stroke="#f08a86" stroke-width="2" d="M26 23h4v4h-4z"/></svg></button>
          <button aria-label="Align"><svg viewBox="0 0 32 32"><path class="b" d="M17 3h10v14H17z"/><path class="g" d="M5 19h22v10H5z"/></svg></button>
          <button aria-label="3D mirror"><svg viewBox="0 0 32 32"><path class="g" d="M1 7l4-4h8v20l-4 4H1z"/><path class="w" d="M15 0h2v32h-2z"/><path class="bd" d="M19 3h8l4 4v20h-8l-4-4z"/><path class="b" d="M23 7h8v20h-8z"/></svg></button>
          <button aria-label="Move"><svg viewBox="0 0 32 32"><path class="w" d="M16 1l5 6h-4v8h8v-4l6 5-6 5v-4h-8v8h4l-5 6-5-6h4v-8H7v4l-6-5 6-5v4h8V7h-4z"/></svg></button>
          <button aria-label="Mirror"><svg viewBox="0 0 32 32"><path class="sg" d="M14 6v24H2z"/><path fill="none" stroke="#84c2f8" stroke-width="2" d="M18 6v24h12z"/></svg></button>
          <button aria-label="Select similar"><svg viewBox="0 0 32 32"><path class="sw" d="M3 3h20v8M3 3v17h12"/><path class="w" d="M1 1h4v4H1zM10 1h4v4h-4zM20 1h4v4h-4zM1 10h4v4H1zM10 10h4v4h-4zM1 18h4v4H1zM10 18h4v4h-4zM18 11l14 15-8 1-6 4zM27 9h5v2h-5zM29 7h2v6h-2z"/></svg></button>
          <button aria-label="3D rotate"><svg viewBox="0 0 32 32"><g fill="none" stroke-width="2.200"><circle cx="16" cy="16" r="14" stroke="#6fcf7b"/><ellipse cx="16" cy="16" rx="14" ry="6" stroke="#84c2f8"/><ellipse cx="16" cy="16" rx="6" ry="14" stroke="#f08a86"/></g><path class="sg" d="M14 14h4v4h-4z"/></svg></button>
          <button aria-label="3D align"><svg viewBox="0 0 32 32"><path class="g" d="M0 6l8-6v26l-8 6z"/><path fill="#3d4452" d="M2 8l4-4v20l-4 4z"/><path class="g" d="M4 20h20l6-2v9l-5 5H4z"/><path class="b" d="M4 9h10v11H4z"/><path class="bd" d="M4 9l5-4h9v10l-4 5V9z"/></svg></button>
          <button aria-label="3D array"><svg viewBox="0 0 32 32"><path class="bd" d="M0 8l8-8h24v24l-8 8H0z"/><path class="b" d="M0 9h23v23H0z"/><path class="bl" d="M1 8l8-8h22l-7 8z"/><path class="g" d="M12 9l4-4h10v12l-4 4H12z"/><path stroke="#3d4452" stroke-width="1.500" fill="none" d="M11 9v23M0 21h23l9-8M11 8l8-8"/></svg></button>
          <button aria-label="Copy"><svg viewBox="0 0 32 32"><circle class="sg" cx="7" cy="7" r="6"/><circle cx="15" cy="25" r="6" fill="none" stroke="#84c2f8" stroke-width="2"/><path fill="none" stroke="#84c2f8" stroke-width="2" d="M23 20q8-3 8 5t-8 5q-3-5 0-10z"/><path class="sw" d="M16 3h9v6"/><path class="w" d="M20 8h10l-5 6z"/></svg></button>
          <button aria-label="Rotate"><svg viewBox="0 0 32 32"><path class="sw" d="M18 4Q3 3 2 18q1 13 14 13 13-1 14-15"/><path class="w" d="M15 0l9 5-9 5z"/></svg></button>
          <button class="fly" aria-label="Fillet"><svg viewBox="0 0 32 32"><path fill="none" stroke="#84c2f8" stroke-width="2" d="M1 17Q2 2 17 1"/><path class="sg" d="M20 1h12M1 20v12"/></svg></button>
          <button class="fly" aria-label="Trim"><svg viewBox="0 0 32 32"><path class="ba" d="M0 2h4v2H0zM6 2h4v2H6zM12 2h4v2h-4z"/><path class="sg" d="M24 3h8"/><path class="g" d="M8 5l5 3 10 15-4 2zM17 3l3-3v18l-4 2z"/><circle class="sg" cx="18" cy="27" r="3.500"/><circle class="sg" cx="26" cy="24" r="3.500"/></svg></button>
          <button aria-label="Offset"><svg viewBox="0 0 32 32"><path fill="none" stroke="#84c2f8" stroke-width="2" d="M32 5H13Q1 5 1 16t12 11h19"/><path class="sg" d="M32 11H13q-6 0-6 5t6 5h19"/></svg></button>
          <button class="fly" aria-label="Array"><svg viewBox="0 0 32 32"><path class="g" d="M2 2h12v12H2z"/><path class="b" d="M18 2h12v12H18zM2 18h12v12H2zM18 18h12v12H18z"/></svg></button>
          <button aria-label="3D scale"><svg viewBox="0 0 32 32"><path class="sg" d="M5 13h17v17H5z"/><path fill="none" stroke="#84c2f8" stroke-width="2" d="M1 13v18M7 9l6-7h17l-7 7zM26 12l5-6v14l-5 8z"/></svg></button>
          <button aria-label="Erase"><svg viewBox="0 0 32 32"><path fill="#f8d488" d="M14 17L30 0h2v5L19 23z"/><path class="w" d="M10 20l4-3 5 6-4 4z"/><circle cx="10" cy="25" r="5" fill="#e96b66"/><path class="sg" d="M0 31h6"/><path class="ba" d="M16 30h16v2H16z"/></svg></button>
          <button aria-label="Stretch"><svg viewBox="0 0 32 32"><path class="sg" d="M13 17V1H1v30h12v-3"/><path fill="none" stroke="#84c2f8" stroke-width="2" d="M16 1h5l10 30H16"/><path class="sw" d="M8 23h10"/><path class="w" d="M17 18l5 5-5 5z"/></svg></button>
          <button aria-label="Scale"><svg viewBox="0 0 32 32"><path fill="none" stroke="#84c2f8" stroke-width="2" d="M1 12V1h30v30H20"/><path class="sg" d="M1 15h16v16H1z"/></svg></button>
          <button aria-label="Join"><svg viewBox="0 0 32 32"><path class="ba" d="M7 11l9 5-9 5zM25 11l-9 5 9 5z"/><path class="sg" d="M0 16h7M25 16h7"/></svg></button>
          <button aria-label="Change space"><svg viewBox="0 0 32 32"><path class="gd" d="M0 2h20v10h-8v9H0z"/><path class="sg" d="M13 15h18v14H13zM22 5h6v5M3 20v7h7"/><path class="gd" d="M16 18l8 8h-8zM24 8h8l-4 5zM0 22l3-5 4 5z"/></svg></button>
          <button aria-label="Edit polyline"><svg viewBox="0 0 32 32"><path class="sg" d="M24 9q8 1 7 7t-9 7H8"/><use href="#pencil" x="0" y="8" width="16" height="16"/></svg></button>
          <button aria-label="Edit spline"><svg viewBox="0 0 32 32"><path class="sg" d="M1 31q0-12 7-16M12 15q7 12 12 12 6-1 7-19"/><use href="#pencil" x="9" y="0" width="16" height="16"/></svg></button>
          <button aria-label="Reverse"><svg viewBox="0 0 32 32"><path class="sg" d="M0 11h24M8 21h24"/><path class="ba" d="M23 6l9 5-9 5zM9 16v10l-9-5z"/></svg></button>
          <button class="fly" aria-label="Draw order"><svg viewBox="0 0 32 32"><path class="g" d="M0 0h16v6H5v4H0zM26 22h6v10H16v-6h10z"/><path class="b" d="M6 8h20v16H6z"/></svg></button>
        </div>
      </section>

      <section class="tools">
        <header><i class="tri"></i><h2>Visualize</h2><button class="cog" aria-label="Visualize settings"><svg><use href="#gear"/></svg></button></header>
        <div class="grid">
          <button class="big" aria-label="Materials"><svg viewBox="0 0 64 64"><circle cx="32" cy="32" r="31" fill="#fff"/><path fill="#585858" d="M26 13h12v11H26zM26 40h12v12H26zM12 24h14v16H12zM38 24h14v16H38zM16 8l9-5 1 10H14q-2 4-2 9l-8 2q2-8 6-13zM48 8l-9-5-1 10h12q2 5 2 11l8-2q-2-7-6-12zM4 40h9l3 12h10l-1 9-11-5v-4h-4q-5-6-6-12zM60 40h-9l-3 12H38l1 9 11-5v-4h4q5-6 6-12z"/><circle cx="32" cy="32" r="31" fill="none" stroke="#e4e4e4" stroke-width="2"/></svg></button>
          <button class="big fly" aria-label="Light"><svg viewBox="0 0 64 64"><path fill="#f8d488" d="M12 46Q12 36 5 28 0 20 4 12 10 2 20 2t16 10q2 8-2 16-6 8-6 18z"/><ellipse cx="12" cy="11" rx="7" ry="4" fill="#fbecc8" transform="rotate(-45 12 11)"/><path fill="#f8d488" stroke="#3d4452" stroke-width="1.500" d="M48 0l3 10 10-5-5 9 9 3-9 3 4 9-9-4-3 9-3-9-10 4 5-9-11-3 11-3-4-9 9 5z"/><path class="w" d="M12 48h16v10H12z"/><path class="gd" d="M20 48h8v10h-8zM12 58h16l-5 5h-6z"/></svg></button>
        </div>
      </section>

      <footer class="pfoot"><button aria-label="Add palette"><svg width="22" height="22" viewBox="0 0 22 22"><path class="sg" d="M11 0v22M0 11h22"/></svg></button><button aria-label="Manage palettes"><svg width="28" height="22" viewBox="0 0 28 22"><path class="sg" d="M5 1h22M5 7h22M5 20h22"/><path class="g" d="M0 12h19v4H0zM21 14l3-4 3 4z"/></svg></button></footer>
    </aside>

    <div class="stage">
      <div class="upper">
        <main class="docs">
          <div class="doctabs"><button class="start" aria-label="Start tab"><svg width="28" height="28" viewBox="0 0 28 28"><path class="b" d="M0 0h13v14H0z"/><path class="g" d="M15 2h13v12H15zM2 16h11v12H2zM15 16h13v12H15z"/></svg></button><button class="plus" aria-label="New drawing"><svg width="22" height="22" viewBox="0 0 22 22"><path class="sg" d="M11 0v22M0 11h22"/></svg></button><button class="doc">neck1 2</button><button class="doc on">oryx_*</button></div>
          <div class="canvas">
            <svg class="model" viewBox="364 196 2038 1444" role="img" aria-label="Back view of the oryx body model">
              <defs>
                <linearGradient id="a"><stop offset="0" stop-color="#d8604f"/><stop offset=".13" stop-color="#e3664d"/><stop offset=".5" stop-color="#ef6c48"/><stop offset="1" stop-color="#e4674d"/></linearGradient>
                <linearGradient id="b"><stop offset="0" stop-color="#c05060"/><stop offset=".05" stop-color="#ea6a4a"/><stop offset=".16" stop-color="#f06d48"/><stop offset=".3" stop-color="#e2664d"/><stop offset=".6" stop-color="#cf5b56"/><stop offset=".85" stop-color="#b34c64"/><stop offset="1" stop-color="#a0446c"/></linearGradient>
                <linearGradient id="c"><stop offset="0" stop-color="#80367c"/><stop offset=".18" stop-color="#b04c65"/><stop offset=".36" stop-color="#d55e54"/><stop offset=".65" stop-color="#e8694c"/><stop offset=".87" stop-color="#f26d48"/><stop offset="1" stop-color="#e4674c"/></linearGradient>
                <linearGradient id="d"><stop offset="0" stop-color="#e9694b"/><stop offset=".35" stop-color="#e0644f"/><stop offset=".65" stop-color="#8b3a78"/><stop offset="1" stop-color="#4d1b95"/></linearGradient>
                <linearGradient id="e"><stop offset="0" stop-color="#702d86"/><stop offset=".3" stop-color="#8a3680"/><stop offset=".88" stop-color="#682989"/><stop offset=".92" stop-color="#5a208d"/><stop offset="1" stop-color="#4d1b95"/></linearGradient>
                <radialGradient id="f" gradientUnits="userSpaceOnUse" cx="0" cy="0" r="1" gradientTransform="translate(1050 1074) scale(290 36)"><stop offset="0" stop-color="#c05460"/><stop offset=".4" stop-color="#b54e64"/><stop offset=".75" stop-color="#8d3a78"/><stop offset="1" stop-color="#541d92"/></radialGradient>
                <radialGradient id="g" gradientUnits="userSpaceOnUse" cx="0" cy="0" r="1" gradientTransform="translate(1670 1078) scale(230 38)"><stop offset="0" stop-color="#cf5a57"/><stop offset=".45" stop-color="#b85062"/><stop offset=".8" stop-color="#86377b"/><stop offset="1" stop-color="#541d92"/></radialGradient>
                <linearGradient id="h" x2="0" y2="1"><stop offset="0" stop-color="#4a5fd0" stop-opacity=".75"/><stop offset="1" stop-color="#4a5fd0" stop-opacity="0"/></linearGradient>
                <linearGradient id="i" x2="0" y2="1"><stop offset="0" stop-color="#8a4444"/><stop offset=".4" stop-color="#cc6262"/><stop offset="1" stop-color="#6e3a3c"/></linearGradient>
                <linearGradient id="j"><stop offset="0" stop-color="#3a62a4"/><stop offset=".5" stop-color="#5f98e2"/><stop offset="1" stop-color="#355c9c"/></linearGradient>
                <linearGradient id="k" x2="0" y2="1"><stop offset="0" stop-color="#939393"/><stop offset="1" stop-color="#b2b2b2"/></linearGradient>
              </defs>
              <path fill="url(#a)" d="M704 866h210v188H704z"/>
              <path fill="url(#b)" d="M914 866h342v188H914z"/>
              <path fill="url(#c)" d="M1483 866h252v188h-252z"/>
              <path fill="url(#d)" d="M1735 866h57v188h-57z"/>
              <path fill="url(#e)" d="M1792 866h244v188h-244z"/>
              <path fill="url(#f)" d="M757 1052h499v54H980C940 1105 914 1103 872 1089 830 1075 800 1055 757 1055z"/>
              <path fill="#7a3084" opacity=".65" d="M757 1052h185q14 4 20 30 10 20 30 24h-12C940 1105 914 1103 872 1089 830 1075 800 1055 757 1055z"/>
              <path fill="url(#g)" d="M1483 1052h290v54h-290z"/>
              <path fill="#4d1b96" d="M1771 1052h224v4C1950 1056 1925 1070 1880 1087 1835 1104 1830 1104 1768 1105z"/>
              <path fill="#d75f52" d="M1256 866h227v240h-227z"/>
              <path class="edge1" d="M731 866v186M888 866v186M925 866v186M1014 866v186M1256 866v186M1483 866v186M1571 866v186M1676 866v186M1721 866v186M1748 866v186M1852 866v186M2009 866v186M914 1051h342M1483 1051h553M1625 1052l-4 52M1677 1052v52M1773 1053l-8 50"/>
              <path class="edge3" d="M704 1054V864M914 866v188M1257 988v117M1482 988v117M1774 866v187M1792 866v187M2036 864v190"/>
              <path class="edge4" d="M703 865h1335M1735 866v188M704 1054h238M982 1054h142M1625 1054h53M1790 1054h248M970 1106h802"/>
              <path class="edge4" d="M757 1055C800 1055 830 1075 872 1089 914 1103 940 1105 980 1105M942 1054q12 2 18 22 8 26 24 26l25 4M1735 1053q9 0 10 8l10 42M1790 1054q-11 1-13 10l-9 40M1995 1056C1950 1056 1925 1070 1880 1087 1835 1104 1830 1104 1768 1106"/>
              <path class="edge4" d="M1815 1102C1850 1096 1880 1085 1912 1072"/>
              <path fill="url(#h)" d="M707 988h1334l4 16H1300L707 997z"/>
              <path stroke="#e02a30" stroke-width="2" fill="none" d="M711 990l1330 6v-8"/>
              <path fill="#47a0d6" stroke="#6cf5f8" stroke-width="2" d="M566 936h1624v51H566z"/>
              <path fill="url(#i)" d="M1428 1102h96l3 6-3 6h-96z"/>
              <path fill="url(#j)" d="M1421 1110h11v94l-5 4-6-4z"/>
              <circle cx="1427" cy="1108" r="5" fill="#4f9b55"/>
              <path stroke="#cfe" d="M1424 1105l6 6" opacity=".5"/>
              <text class="ucsl" x="1423" y="1101" fill="#46b33c">Y</text>
              <text class="ucsl" x="1518" y="1101" fill="#e03228">X</text>
              <text class="ucsl z" x="1423" y="1204" fill="#2363f0">Z</text>
              <ellipse cx="2239" cy="301" rx="132" ry="9" fill="#20262e" stroke="#52565c" stroke-width="5"/>
              <path fill="#b4b6b8" d="M2222 289h8l22 3v-3h7v5h-8l-22-3v3h-7zM2094 302h20l22 2-4 2-20-2-18-1zM2350 301l30 1-10 1-22 3h-4z"/>
              <path fill="url(#k)" stroke="#7d7f82" d="M2189.500 309.500h101v100h-101z"/>
              <path fill="#9398a0" d="M2208 328h64v64h-64z"/>
              <text class="cubeface" transform="rotate(180 2240 360)" x="2240" y="369">BACK</text>
            </svg>
            <div class="crumbs"><button>+</button><span class="bar"></span><button>Back</button><span class="bar"></span><button>Conceptual</button></div>
            <i class="pick"></i>
            <div class="dynprompt"><span>Select objects to extrude or</span><b></b></div>
            <button class="wcs">WCS<svg width="20" height="14" viewBox="0 0 20 14"><path fill="none" stroke="#222830" stroke-width="2" d="M2 1h16l-8 10z"/></svg></button>
            <div class="cmd"><button class="cmdmenu">&gt;_<i class="tri"></i></button><label for="cmdline" class="cmdtext">EXTRUDE Select objects to extrude or [MOde]:</label><input id="cmdline" type="text"><button class="help" aria-label="Help">?</button><i class="tri up"></i></div>
          </div>
        </main>

        <aside class="layers">
          <div class="ltabs">
            <button class="on" aria-label="Layers"><svg width="32" height="32" viewBox="0 0 32 32"><path class="g" d="M11 2h17l-10 11H3zM2 15h16l8-8-6 10-3 4H0zM2 23h14v5H0z"/><circle class="g" cx="25" cy="23" r="8" stroke="#3c4554" stroke-width="2"/><path class="k" d="M24 18h2v2h-2zM24 22h2v6h-2z"/></svg></button>
            <button aria-label="References"><svg width="32" height="32" viewBox="0 0 32 32"><path class="g" d="M14 6h10v9h8v13H3V19h11z"/><path class="g" d="M26 6l6 7h-6z"/><path class="sg" d="M11 1Q1 0 1 6v8q0 4 5 4t5-4V7q0-2-3-2T6 7v8"/></svg></button>
            <button aria-label="Content"><svg width="30" height="30" viewBox="0 0 30 30"><path class="gd" d="M0 1h28v6H0z"/><path class="g" d="M0 8h28v22H0z"/><path class="k" d="M3 10h6v6H3zM11 10h6v6h-6zM19 10h6v6h-6zM3 18h6v6H3zM11 18h6v6h-6zM19 18h6v6h-6zM3 26h22v2H3z"/></svg></button>
            <span></span>
            <button class="fold" aria-label="Collapse">»</button>
          </div>
          <div class="lhead"><h2>Layers</h2><button aria-label="Undock"><svg width="22" height="28" viewBox="0 0 22 28"><path class="sg" d="M9 7V2h12v24H9v-5M2 14h9M6 10l-4 4 4 4"/></svg></button></div>
          <div class="ltools">
            <button aria-label="Make current"><svg viewBox="0 0 32 32"><path class="b" d="M8 6h23l-8 12H1z"/><circle class="g" cx="16" cy="6" r="6"/><path class="g" d="M2 23h18l10-11v4l-9 11H1zM2 29h18l9-9v3l-8 8H1z"/></svg></button>
            <button aria-label="Match layer"><svg viewBox="0 0 32 32"><use href="#stack" width="28" height="28"/><path fill="#f8d488" d="M15 22l4-2 9 10-3 2z"/><path class="w" d="M21 20l5-3v4l5 2-3 4-6-3z"/></svg></button>
            <button aria-label="Previous layer"><svg viewBox="0 0 32 32"><use href="#stack" x="4" y="7" width="27" height="25"/><path class="ba" d="M0 8l10-7v4q9 0 10 10-4-5-10-4v4z"/></svg></button>
            <button aria-label="Isolate"><svg viewBox="0 0 32 32"><use href="#stack" x="-1" width="28" height="26"/><path class="b" d="M3 19h12l8-6v2l-6 7H0z"/><path class="sw" d="M26 20l-8 9"/><path class="w" d="M15 24v7h7z"/></svg></button>
            <button aria-label="Unisolate"><svg viewBox="0 0 32 32"><use href="#stack" x="-1" width="28" height="26"/><path class="b" d="M3 19h12l8-6v2l-6 7H0z"/><path class="sw" d="M17 30l8-9"/><path class="w" d="M28 26v-8h-7z"/></svg></button>
            <button aria-label="Freeze"><svg viewBox="0 0 32 32"><path class="g" d="M10 1h18l-9 12H1z"/><use href="#snow" x="14" y="11" width="18" height="18" color="#84dfe3"/></svg></button>
            <button aria-label="Off"><svg viewBox="0 0 32 32"><path class="g" d="M10 1h18l-9 12H1z"/><circle cx="24" cy="18" r="6" fill="#84dfe3"/><path class="w" d="M21 24h6v4h-6z"/></svg></button>
            <button aria-label="Lock"><svg viewBox="0 0 32 32"><path class="g" d="M10 1h18l-9 12H1z"/><use href="#lock" x="17" y="10" width="14" height="19" color="#84dfe3"/></svg></button>
            <button aria-label="Unlock"><svg viewBox="0 0 32 32"><path class="g" d="M10 1h18l-9 12H1z"/><path fill="#f8c46a" d="M14 18h14v11H14z"/><path fill="none" stroke="#f8c46a" stroke-width="2" d="M23 18v-4q0-4 4-4t4 4v3"/></svg></button>
          </div>
          <div class="combo"><i class="dot"></i><svg class="faint" width="14" height="20"><use href="#lock"/></svg><svg class="faint" width="18" height="18"><use href="#snow"/></svg><i class="swatch"></i><select aria-label="Current layer"><option>0</option></select><i class="tri"></i></div>
          <div class="combo state"><select aria-label="Layer state"><option>Unsaved Layer State</option></select><i class="tri"></i></div>
          <button class="hide"><i class="tri"></i>Hide Layer List</button>
          <div class="list">
            <table>
              <colgroup><col class="c1"><col class="c2"><col class="c3"><col class="c3"><col class="c5"><col></colgroup>
              <thead><tr>
                <th aria-label="Visible"><svg width="26" height="14" viewBox="0 0 26 14"><path fill="#dadada" fill-rule="evenodd" d="M0 7q13-14 26 0-13 14-26 0zm13-5a5 5 0 1 0 0 10 5 5 0 0 0 0-10z"/><circle class="g" cx="13" cy="7" r="2.500"/></svg></th>
                <th class="sorted"><div><svg width="17" height="17" viewBox="0 0 17 17"><path class="g" d="M0 0h17v17H0z"/><path class="k" d="M2 2h12L2 14z"/></svg><span>N...</span><svg width="10" height="18" viewBox="0 0 10 18"><path class="g" d="M5 0l5 7H0zM0 11h10l-5 7z"/></svg></div></th>
                <th aria-label="Frozen"><svg width="18" height="18"><use href="#snow"/></svg></th>
                <th aria-label="Locked"><svg width="14" height="20"><use href="#lock"/></svg></th>
                <th aria-label="Lineweight"><svg width="18" height="16" viewBox="0 0 18 16"><path class="g" d="M0 0h18v2H0zM0 5h18v3H0zM0 11h18v4H0z"/></svg></th>
                <th aria-label="Linetype"><svg width="18" height="14" viewBox="0 0 18 14"><path class="g" d="M0 0h2v2H0zM4 0h2v2H4zM8 0h2v2H8zM12 0h2v2h-2zM16 0h2v2h-2zM0 6h5v2H0zM7 6h4v2H7zM13 6h5v2h-5zM0 12h8v2H0zM10 12h8v2h-8z"/></svg></th>
              </tr></thead>
              <tbody><tr><td><i class="dot"></i></td><td><div class="nm"><i class="swatch"></i>0</div></td><td></td><td></td><td class="lw">D...</td><td class="lt"><hr></td></tr></tbody>
            </table>
          </div>
          <div class="hscroll"><i></i></div>
          <div class="lfoot">
            <button aria-label="New layer"><svg width="28" height="28" viewBox="0 0 28 28"><path class="sg" d="M10 3h15l-7 10H3z"/><path fill="none" stroke="#a9abae" stroke-width="2" d="M2 18h16l7-9M2 24h16l7-9"/></svg></button>
            <button aria-label="Layer states"><svg width="30" height="30" viewBox="0 0 30 30"><path class="sg" d="M9 2h12l-6 7H3z"/><path fill="none" stroke="#a9abae" stroke-width="2" d="M2 15h12l8-8M2 22h9"/><path fill="#3b4454" stroke="#dadada" stroke-width="2" d="M13 16h15v13H13z"/><path class="g" d="M16 19h2v2h-2zM20 19h6v2h-6zM16 24h2v2h-2zM20 24h6v2h-6z"/></svg></button>
            <button aria-label="New group"><svg width="28" height="24" viewBox="0 0 28 24"><path class="g" d="M1 2h9l3 4h8v2H8L2 20H1zM9 10h18l-6 12H3z"/></svg></button>
            <button aria-label="Dynamic group"><svg width="28" height="24" viewBox="0 0 28 24"><path class="g" d="M1 2h9l3 4h8v2H8L2 20H1zM9 10h18l-6 12H3z"/><path class="k" d="M18 10l-6 6h4l-2 5 6-6h-4z"/></svg></button>
            <button class="minus" aria-label="Delete"><i></i></button>
            <button aria-label="Columns"><svg width="38" height="18" viewBox="0 0 38 18"><path class="sg" d="M1 2h18v14H1zM7 2v14M13 2v14"/><path class="g" d="M26 7h11l-5 6z"/></svg></button>
          </div>
          <div class="search"><svg width="36" height="28" viewBox="0 0 36 28"><g fill="none" stroke="#555" stroke-width="2"><circle cx="11" cy="12" r="9"/><path d="M17 19l7 7M25 10l4 4 5-4"/></g></svg><input type="search" placeholder="Search for layer" aria-label="Search for layer"></div>
        </aside>
      </div>

      <footer class="status">
        <div class="sheets"><button class="on">Model</button><button class="add" aria-label="Add layout"><svg width="22" height="22" viewBox="0 0 22 22"><path class="sg" d="M11 0v22M0 11h22"/></svg></button><button class="lay">Layout1</button></div>
        <output>−249.1813, 146.9671 , −176.2959</output>
        <div class="modes">
          <button aria-label="Grid"><svg viewBox="0 0 40 40"><path class="sg" d="M11 5v30M20 5v30M29 5v30M5 12h30M5 20h30M5 28h30"/></svg></button>
          <button aria-label="Snap"><svg viewBox="0 0 40 40"><path class="g" d="M7 8h3v3H7zM15 8h3v3h-3zM22 8h3v3h-3zM29 8h3v3h-3zM7 18h3v3H7zM15 18h3v3h-3zM22 18h3v3h-3zM29 18h3v3h-3zM7 28h3v3H7zM15 28h3v3h-3zM22 28h3v3h-3zM29 28h3v3h-3z"/></svg></button>
          <button aria-label="Ortho"><svg viewBox="0 0 40 40"><path class="sg" d="M5 5v30h31M5 26h9v9"/></svg></button>
          <button aria-label="Polar"><svg viewBox="0 0 40 40"><path class="sg" d="M24 9a13 13 0 1 0 7 9M18 22L34 6M18 22h15"/></svg></button>
          <button class="on" aria-label="Dynamic input"><svg viewBox="0 0 40 40"><path class="sg" d="M11 8v16M4 16h14"/><path class="g" d="M16 25h20v10H16z"/><path class="k" d="M19 27h2v6h-2z"/></svg></button>
          <button aria-label="Lineweight"><svg viewBox="0 0 40 40"><path class="g" d="M4 6h14v4H4zM20 7h16v2H20zM4 15h18v5H4zM24 16h12v2H24zM4 25h14v8H4zM20 26h16v2H20z"/></svg></button>
          <button aria-label="Transparency"><svg viewBox="0 0 40 40"><path class="sg" d="M7 7h26v26H7z"/><path class="g" d="M10 10h4v4h-4zM18 10h4v4h-4zM26 10h4v4h-4zM14 14h4v4h-4zM22 14h4v4h-4zM10 18h4v4h-4zM18 18h4v4h-4zM26 18h4v4h-4zM14 22h4v4h-4zM22 22h4v4h-4zM10 26h4v4h-4zM18 26h4v4h-4zM26 26h4v4h-4z"/></svg></button>
          <button class="on" aria-label="Selection cycling"><svg viewBox="0 0 40 40"><path class="sg" d="M12 5H7v26h5M21 5h6v12M13 9h8v6h-8z"/><circle class="sg" cx="17" cy="23" r="4"/><path class="g" d="M25 19l11 11-5 1 3 6-3 1-3-6-3 3z"/></svg></button>
          <button class="on" aria-label="Object tracking"><svg viewBox="0 0 40 40"><path class="sg" d="M28 8L5 31h31"/><path class="g" d="M14 16h6v6h-6z"/></svg></button>
          <button class="on" aria-label="Object snap"><svg viewBox="0 0 40 40"><path class="sg" d="M5 5h8v8H5zM16 9h19v26H9V16"/></svg></button>
          <button class="on" aria-label="Annotation visibility"><svg viewBox="0 0 40 40"><use href="#compass" class="gt" x="4" y="4" width="28" height="32"/><circle class="g" cx="30" cy="12" r="7" stroke="#6792c4"/></svg></button>
          <button aria-label="Annotation autoscale"><svg viewBox="0 0 40 40"><use href="#compass" class="gt" x="4" y="4" width="28" height="32"/><path fill="#f6c75e" stroke="#3b4352" d="M34 5L24 14h6l-3 8 9-9h-5z"/></svg></button>
          <button class="scale"><svg width="28" height="32"><use href="#compass"/></svg><span>1:1</span><i class="tri"></i></button>
          <button aria-label="Workspaces"><svg viewBox="0 0 40 40"><path class="sg" d="M5 5h12v12H5zM17 26l6 9H11z"/><circle class="sg" cx="29" cy="17" r="6"/></svg></button>
          <button aria-label="Settings"><svg viewBox="0 0 40 40"><use href="#gear" class="gf" x="5" y="5" width="30" height="30"/></svg></button>
        </div>
      </footer>
    </div>
  </div>
  <div class="frame"></div>
</div>
</body>
</html>
```

FILE: styles.css
```css
* { box-sizing: border-box; }

html, body { height: 100%; }

body {
  margin: 0;
  display: flex;
  flex-direction: column;
  overflow: hidden;
  background: linear-gradient(90deg, #10161f 0 7%, #66686a 8% 84%, #0e1216 85%);
  color: #fff;
  font: 22px/28px "Noto Sans", sans-serif;
}

button, select, input {
  margin: 0;
  padding: 0;
  border: 0;
  background: none;
  color: inherit;
  font: inherit;
  appearance: none;
}

svg, hr, i { display: block; flex: none; }
h1, h2 { margin: 0; font: inherit; }

.defs { position: absolute; width: 0; height: 0; }

/* icon paints */
.g { fill: #dadada; }
.gd { fill: #b9b9b9; }
.w { fill: #fff; }
.k { fill: #3c4453; }
.b { fill: #97c9f7; }
.bl { fill: #bbdcfc; }
.bd { fill: #76aedf; }
.ba { fill: #84c2f8; }
.o { fill: #ecb68e; }
.y { fill: #ecd68e; }
.yl { fill: #fbecb4; }
.yd { fill: #cfb76f; }
.gn { fill: #85d390; }
.sg, .sw, .sw3, .sy, .sk { fill: none; stroke: #dadada; stroke-width: 2; }
.sw { stroke: #fff; }
.sw3 { stroke: #fff; stroke-width: 3; }
.sy { stroke: #ecd07c; }
.sk { stroke: #4a5160; }
.mesh { fill: none; stroke: #a58f50; stroke-width: 1; }
.axis { fill: #84c2f8; font: 600 32px "Open Sans", sans-serif; }
.three { font-size: 40px; }
.gt { color: #dadada; }
.gf { fill: #dadada; }

.tri {
  width: 12px;
  height: 8px;
  background: #97999c;
  clip-path: polygon(0 0, 100% 0, 50% 100%);
}
.tri.up { clip-path: polygon(50% 0, 100% 100%, 0 100%); }

/* system menu bar */
.menubar {
  flex: none;
  height: 47px;
  padding: 2px 46px 0 34px;
  display: flex;
  align-items: center;
  justify-content: space-between;
  background: linear-gradient(90deg, #899ca8 0 55%, #929ea7 80%, #9b9b9e);
  border-bottom: 3px solid #334358;
  color: #0d1e29;
  font: 27px/42px Inter, sans-serif;
}
.menus { display: flex; align-items: center; gap: 38px; }
.menus .appname { font-weight: 700; font-size: 28px; }
.tray { display: flex; align-items: center; gap: 26px; color: #16242d; }
.ik, .ik3, .ik4 { fill: none; stroke: currentColor; stroke-width: 2; }
.ik3 { stroke-width: 3; }
.ik4 { stroke-width: 4; }
.blue { margin-right: 8px; }
.tray time { padding-left: 8px; }
.spot { margin-left: 22px; }
.siri { margin-left: 8px; }

/* application window */
.window {
  position: relative;
  flex: 1;
  min-height: 0;
  margin-bottom: 4px;
  display: flex;
  flex-direction: column;
  background: #3c4554;
  border-radius: 8px 8px 6px 6px;
  overflow: hidden;
}
.frame {
  position: absolute;
  inset: 0;
  border: solid rgba(0, 0, 0, .34);
  border-width: 11px 58px 54px;
  pointer-events: none;
}

.titlebar {
  flex: none;
  height: 42px;
  display: grid;
  grid-template-columns: 1fr auto 1fr;
  align-items: center;
}
.lights { display: flex; gap: 16px; padding-left: 10px; }
.lights button { width: 24px; height: 24px; border-radius: 50%; }
.close { background: radial-gradient(circle, #4a0d08 0 4px, #f55f54 5px); }
.min { background: #fabd4a; }
.max { background: #65cd56; }
.title {
  display: flex;
  align-items: center;
  gap: 11px;
  padding: 3px 12px 0 0;
  color: #a6a9ae;
  font: 24px/32px Inter, sans-serif;
}
.user {
  justify-self: end;
  width: 239px;
  height: 42px;
  display: flex;
  align-items: center;
  gap: 13px;
  padding: 3px 10px 0 9px;
  background: #4e596d;
  border: solid #242b35;
  border-width: 0 0 2px 2px;
  font: 24px/32px Inter, sans-serif;
}
.user .tri { margin-left: auto; background: #c4c6c9; }

.toolbar {
  flex: none;
  height: 63px;
  padding: 11px 0 0 333px;
  display: flex;
  gap: 130px;
  border-bottom: 2px solid #252d38;
}
.tgroup { display: flex; gap: 34px; height: 32px; }
.tgroup svg { width: 32px; height: 32px; overflow: visible; }
.badge { position: relative; }
.badge::after {
  content: "";
  position: absolute;
  left: 28px;
  top: -4px;
  width: 20px;
  height: 20px;
  border: 2px solid #fff;
  border-radius: 50%;
  background: #e97440;
}

.workspace { flex: 1; min-height: 0; display: flex; }

/* tool palette */
.palette {
  flex: none;
  width: 364px;
  display: flex;
  flex-direction: column;
  background: #3d4452;
  border-right: 2px solid #242b34;
}
.ptabs {
  flex: none;
  height: 44px;
  display: grid;
  grid-template-columns: 154px 162px 1fr;
  font: 24px/44px "Liberation Sans", Arial, sans-serif;
}
.ptab { border-right: 2px solid #242b34; }
.dim, .ptabs .fold { background: #32353f; color: #aeb0b4; border-bottom: 2px solid #242b34; }
.dim { padding-right: 6px; }
.ptabs .fold { border-right: 0; background: #353b48; color: #999ca1; }

.tools { padding-bottom: 2px; border-bottom: 2px solid #262d38; margin: 0 8px 0 2px; }
.tools header { height: 48px; padding-bottom: 3px; display: flex; align-items: center; font: 20px/28px "Liberation Sans", Arial, sans-serif; }
.tools header .tri { width: 17px; height: 9px; margin-right: 9px; background: #f0f0f0; }
.cog { margin-left: auto; margin-right: 3px; }
.cog svg { width: 18px; height: 18px; fill: #f4f4f4; }
.grid { display: grid; grid-template-columns: repeat(8, 44px); grid-template-rows: 44px; grid-auto-rows: 48px; }
.grid button { position: relative; padding-left: 6px; display: flex; align-items: flex-start; }
.grid svg { width: 32px; height: 32px; overflow: visible; }
.grid .big { grid-row: span 2; grid-column: span 2; padding: 6px 0 0 12px; }
.grid .big svg { width: 64px; height: 64px; }
.fly::after {
  content: "";
  position: absolute;
  left: 36px;
  top: 30px;
  width: 8px;
  height: 8px;
  background: #97999c;
  clip-path: polygon(100% 0, 100% 100%, 0 100%);
}
.big.fly::after { left: 78px; top: 72px; }
.pfoot { margin-top: auto; padding: 0 0 10px 25px; display: flex; gap: 35px; }

/* document area */
.stage { flex: 1; min-width: 0; display: flex; flex-direction: column; }
.upper { flex: 1; min-height: 0; display: flex; }
.docs { flex: 1; min-width: 0; display: flex; flex-direction: column; }
.doctabs {
  flex: none;
  height: 44px;
  display: flex;
  border-right: 2px solid #242b34;
  font: 22px/44px "Liberation Sans", Arial, sans-serif;
}
.doctabs button { border-right: 2px solid #242b34; display: flex; align-items: center; justify-content: center; }
.start { width: 48px; }
.plus { width: 46px; }
.doctabs .doc { width: 258px; padding: 0 6px; justify-content: flex-start; color: #a6a9ae; }
.doctabs .doc.on { background: #4e596d; color: #fff; font-weight: 700; font-size: 20px; }

.canvas { flex: 1; min-height: 0; position: relative; background: #222830; }
.model { position: absolute; inset: 0; width: 100%; height: 100%; }
.edge1, .edge3, .edge4 { fill: none; stroke: #fff; stroke-width: 1; }
.edge3 { stroke-width: 3; }
.edge4 { stroke-width: 4; }
.ucsl { font: 200 30px Inter, sans-serif; opacity: .5; }
.ucsl.z { opacity: 1; }
.cubeface { fill: #4a4f58; font: 700 24px "Liberation Sans Narrow", "Liberation Sans", Arial, sans-serif; text-anchor: middle; }

.crumbs {
  position: absolute;
  left: 30px;
  top: 11px;
  display: flex;
  align-items: center;
  gap: 12px;
  color: #abaeb2;
  font: 500 23px/28px "Noto Sans", sans-serif;
}
.bar { width: 2px; height: 26px; background: #abaeb2; }
.crumbs .bar:first-of-type { margin-left: 12px; }
.pick { position: absolute; left: 33px; top: 182px; width: 14px; height: 14px; border: 2px solid #e6e6e6; }
.dynprompt {
  position: absolute;
  left: 56px;
  top: 213px;
  width: 362px;
  height: 38px;
  padding: 0 8px 5px 2px;
  display: flex;
  align-items: center;
  justify-content: space-between;
  background: #9c9c9c;
  border: 2px solid #111;
  color: #000;
  font-size: 23px;
  white-space: nowrap;
}
.dynprompt b {
  position: relative;
  width: 18px;
  height: 18px;
  margin-top: 8px;
  border: 2px solid #555;
  border-radius: 4px;
  background: #f2f2f2;
}
.dynprompt b::after {
  content: "";
  position: absolute;
  left: 2px;
  top: 4px;
  width: 10px;
  height: 6px;
  background: #333;
  clip-path: polygon(0 0, 100% 0, 50% 100%);
}
.wcs {
  position: absolute;
  left: 1825px;
  top: 342px;
  width: 101px;
  height: 24px;
  padding: 0 10px 0 8px;
  display: flex;
  align-items: center;
  justify-content: space-between;
  border-radius: 8px;
  background: #6b777f;
  color: #222830;
  font: 22px/24px "Liberation Sans", Arial, sans-serif;
}
.cmd {
  position: absolute;
  left: 520px;
  bottom: 2px;
  width: 994px;
  height: 46px;
  display: flex;
  align-items: center;
  padding-right: 9px;
  background: #3b4352;
  font-weight: 700;
  font-size: 21px;
}
.cmdmenu {
  width: 78px;
  height: 46px;
  display: flex;
  align-items: center;
  gap: 10px;
  padding: 0 0 2px 14px;
  border-right: 2px solid #242b34;
  color: #c8cacd;
  font-weight: 400;
}
.cmdtext { padding: 0 0 3px 8px; white-space: nowrap; }
.cmd input { flex: 1; min-width: 0; }
.help {
  width: 27px;
  height: 27px;
  margin-right: 18px;
  border-radius: 50%;
  background: #fff;
  color: #1d222b;
  font: 700 22px/27px Inter, sans-serif;
}

/* layers panel */
.layers {
  flex: none;
  width: 472px;
  display: flex;
  flex-direction: column;
  background: #3c4554;
}
.ltabs { flex: none; height: 45px; display: grid; grid-template-columns: 105px 106px 105px 109px 1fr; }
.ltabs > * {
  display: flex;
  align-items: center;
  justify-content: center;
  background: #31343f;
  border: solid #242b34;
  border-width: 0 2px 2px 0;
}
.ltabs .on { background: none; border-bottom-color: transparent; }
.ltabs .fold { color: #aeb0b4; font-size: 28px; background: #373d4a; }
.lhead {
  height: 38px;
  padding: 0 22px 0 20px;
  display: flex;
  align-items: center;
  justify-content: space-between;
  font: 500 22px/36px "Noto Sans", sans-serif;
}
.ltools { margin: 28px 0 0 28px; display: flex; gap: 16px; height: 32px; }
.ltools svg { width: 32px; height: 32px; }
.combo {
  height: 48px;
  margin: 24px 18px 0 22px;
  padding: 0 8px 0 20px;
  display: flex;
  align-items: center;
  background: #4e596c;
  border: 2px solid #303f42;
  border-radius: 4px;
}
.combo + .combo { margin-top: 8px; }
.state { padding-left: 12px; font-weight: 500; }
.combo select { flex: 1; padding-bottom: 3px; }
.combo .tri { background: #c4c6c9; }
.dot { width: 16px; height: 16px; border-radius: 50%; background: #dadada; }
.swatch { width: 18px; height: 18px; background: #fff; border: 2px solid #000; }
.faint { margin-left: 18px; color: #6c7687; }
.combo .swatch { margin: 0 25px 0 16px; }
.hide {
  align-self: flex-start;
  height: 57px;
  padding: 0 0 4px 28px;
  display: flex;
  align-items: center;
  gap: 23px;
  color: #d2d4d7;
}
.hide .tri { width: 18px; height: 15px; }
.list {
  flex: 1;
  min-height: 0;
  margin: 0 20px 0 21px;
  background: #4e596b;
  border: solid #282e39;
  border-width: 2px 0 2px 2px;
}
.list table { width: 100%; border-collapse: collapse; table-layout: fixed; }
.c1 { width: 52px; }
.c2 { width: 115px; }
.c3 { width: 44px; }
.c5 { width: 94px; }
th {
  height: 44px;
  padding: 0;
  background: #31343f;
  border: solid #282e39;
  border-width: 0 2px 2px 0;
  color: #dadada;
  font-weight: 400;
}
th svg { margin: auto; }
.sorted { position: relative; background: #4e596b; }
.sorted div { display: flex; align-items: center; padding: 0 13px 0 8px; }
.sorted svg { margin: 0; }
.sorted span { margin: 0 auto 0 14px; }
.sorted::after {
  content: "";
  position: absolute;
  left: 50px;
  bottom: 0;
  width: 13px;
  height: 9px;
  background: #3f97f6;
  clip-path: polygon(50% 0, 100% 100%, 0 100%);
}
td { height: 38px; padding: 0; background: #8f9cad; }
td .dot { margin: auto; }
.nm { display: flex; align-items: center; gap: 18px; }
.lw { padding-left: 14px; }
.lt hr { margin: 0 0 0 16px; border: 0; height: 2px; background: #fff; }
.hscroll { flex: none; height: 38px; padding: 8px 74px 0 24px; }
.hscroll i { height: 14px; border-radius: 7px; background: #898e99; }
.lfoot { flex: none; height: 32px; margin: 0 30px 10px 36px; display: flex; align-items: center; gap: 32px; }
.minus { margin-left: auto; }
.minus i { width: 16px; height: 4px; background: #777f8b; }
.search {
  flex: none;
  height: 40px;
  margin: 0 20px 18px 22px;
  padding-left: 10px;
  display: flex;
  align-items: center;
  gap: 8px;
  background: #fff;
  border-radius: 6px;
  font: 26px/40px Inter, sans-serif;
}
.search input { flex: 1; min-width: 0; color: #444; }
.search input::placeholder { color: #b9b9b9; opacity: 1; }

/* status bar */
.status {
  flex: none;
  height: 46px;
  display: flex;
  align-items: center;
  background: #3b4352;
  border-top: 2px solid #242b34;
}
.sheets { flex: 1; align-self: stretch; display: flex; color: #b8bbc0; font: 500 22px/44px "Noto Sans", sans-serif; }
.sheets button { border-right: 2px solid #242b34; }
.sheets .on { width: 120px; padding-right: 6px; color: #fff; }
.sheets .add { width: 48px; display: flex; align-items: center; justify-content: center; }
.sheets .lay { padding: 0 12px; border: 0; color: #a6a9ae; font-weight: 400; }
.status output {
  align-self: stretch;
  padding: 0 8px 0 14px;
  border-left: 2px solid #242b34;
  color: #d2d4d7;
  font: 21px/44px "DejaVu Sans", sans-serif;
}
.modes { display: flex; gap: 4px; padding-right: 10px; }
.modes button { width: 40px; height: 40px; }
.modes button > svg { width: 40px; height: 40px; }
.modes .on { background: #6792c4; }
.modes .scale { width: 104px; display: flex; align-items: center; padding-left: 6px; gap: 8px; color: #dadada; }
.modes .scale > svg { width: 28px; height: 32px; }
.modes .scale .tri { background: #dadada; }
```
